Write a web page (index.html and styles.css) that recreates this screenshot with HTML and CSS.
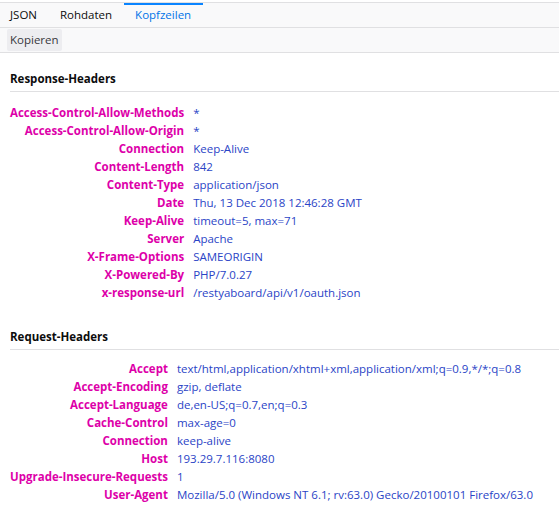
FILE: index.html
```html
<!DOCTYPE html>
<html>
<head>
<meta charset="UTF-8" />
<title>Kopfzeilen</title>
<link rel="stylesheet" href="styles.css">
</head>
<body>
    <div class="tabs">
        <span class="tab">JSON</span>
        <span class="tab">Rohdaten</span>
        <span class="tab selected">Kopfzeilen</span>
    </div>
    <div class="toolbar">
        <button class="btn">Kopieren</button>
    </div>

    <div class="panel">
        <h2 class="section-title">Response-Headers</h2>
        <table class="headers" cellspacing="0" cellpadding="0">
            <tr><td class="name">Access-Control-Allow-Methods</td><td class="value">*</td></tr>
            <tr><td class="name">Access-Control-Allow-Origin</td><td class="value">*</td></tr>
            <tr><td class="name">Connection</td><td class="value">Keep-Alive</td></tr>
            <tr><td class="name">Content-Length</td><td class="value">842</td></tr>
            <tr><td class="name">Content-Type</td><td class="value">application/json</td></tr>
            <tr><td class="name">Date</td><td class="value">Thu, 13 Dec 2018 12:46:28 GMT</td></tr>
            <tr><td class="name">Keep-Alive</td><td class="value">timeout=5, max=71</td></tr>
            <tr><td class="name">Server</td><td class="value">Apache</td></tr>
            <tr><td class="name">X-Frame-Options</td><td class="value">SAMEORIGIN</td></tr>
            <tr><td class="name">X-Powered-By</td><td class="value">PHP/7.0.27</td></tr>
            <tr><td class="name">x-response-url</td><td class="value">/restyaboard/api/v1/oauth.json</td></tr>
        </table>

        <h2 class="section-title">Request-Headers</h2>
        <table class="headers request" cellspacing="0" cellpadding="0">
            <tr><td class="name">Accept</td><td class="value">text/html,application/xhtml+xml,application/xml;q=0.9,*/*;q=0.8</td></tr>
            <tr><td class="name">Accept-Encoding</td><td class="value">gzip, deflate</td></tr>
            <tr><td class="name">Accept-Language</td><td class="value">de,en-US;q=0.7,en;q=0.3</td></tr>
            <tr><td class="name">Cache-Control</td><td class="value">max-age=0</td></tr>
            <tr><td class="name">Connection</td><td class="value">keep-alive</td></tr>
            <tr><td class="name">Host</td><td class="value">193.29.7.116:8080</td></tr>
            <tr><td class="name">Upgrade-Insecure-Requests</td><td class="value">1</td></tr>
            <tr><td class="name">User-Agent</td><td class="value">Mozilla/5.0 (Windows NT 6.1; rv:63.0) Gecko/20100101 Firefox/63.0</td></tr>
        </table>
    </div>
</body>
</html>
```

FILE: styles.css
```css
html, body{
    margin:0px;
    padding:0px;
    background:#fff;
}
body {
    color:#0c0c0d;
    font:11.5px/18px "Open Sans", "Noto Sans", sans-serif;
    padding-top:2px;
}

/* tab bar */
.tabs{
    display:flex;
    height:24px;
    background:#f9f9fa;
    border-top:1px solid #e0e0e2;
    border-bottom:1px solid #e0e0e2;
}
.tab{
    display:flex;
    align-items:center;
    padding:0 12px 0 11px;
    border-top:2px solid transparent;
    box-sizing:border-box;
    height:24px;
    padding-bottom:2px;
}
.tab:first-child{
    padding-left:10px;
}
.tab.selected{
    color:#0074e8;
    border-top-color:#0a84ff;
}

/* toolbar */
.toolbar{
    display:flex;
    align-items:center;
    height:24px;
    padding-left:7px;
    background:#f9f9fa;
    border-bottom:1px solid #e0e0e2;
}
.btn{
    font:inherit;
    color:#38383d;
    height:22px;
    padding:0 3px;
    border:none;
    border-radius:2px;
    background:#ededf0;
}

/* headers */
.section-title{
    margin:14px 0 0 10px;
    padding:4px 0;
    font-size:11.5px;
    line-height:16px;
    font-weight:bold;
    border-bottom:1px solid #e0e0e2;
}
.headers{
    margin:12px 0 23px 10px;
    border-collapse:collapse;
}
.headers.request{
    margin-top:10px;
}
.headers td{
    padding:0;
    height:18px;
    white-space:nowrap;
    vertical-align:top;
}
.headers .name{
    text-align:right;
    font-weight:bold;
    color:#dd00a9;
    padding-right:9px;
}
.headers .value{
    color:#2a44c6;
}
```
